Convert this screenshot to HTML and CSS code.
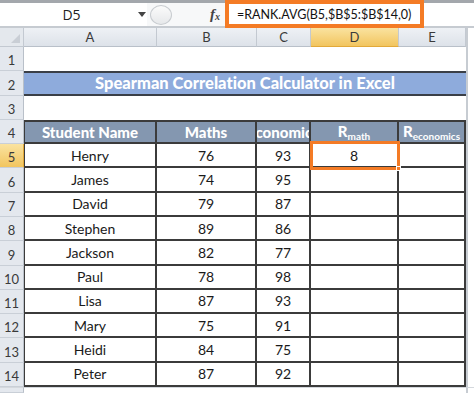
FILE: index.html
```html
<!DOCTYPE html>
<html lang="en">
<head>
  <meta charset="UTF-8">
  <title>Spearman Correlation Calculator</title>
  <link rel="stylesheet" href="styles.css">
</head>
<body>
  <div class="formula-bar">
    <div class="name-box">D5</div>
    <div class="name-arrow">
      <svg width="8" height="5" viewBox="0 0 8 5"><path d="M0 0h8L4 5z" fill="#444"/></svg>
    </div>
    <div class="fx-area">
      <div class="round-btn"></div>
      <span class="fx">f<sub>x</sub></span>
    </div>
    <div class="formula">=RANK.AVG(B5,$B$5:$B$14,0)</div>
    <div class="formula-rest"></div>
  </div>

  <div class="sheet">
    <!-- column headers -->
    <div class="corner"><span class="corner-tri"></span></div>
    <div class="col-head">A</div>
    <div class="col-head">B</div>
    <div class="col-head">C</div>
    <div class="col-head active">D</div>
    <div class="col-head">E</div>
    <div class="edge"></div>

    <!-- row 1 -->
    <div class="row-head">1</div>
    <div class="blank span5"></div>
    <div class="edge"></div>

    <!-- row 2 -->
    <div class="row-head">2</div>
    <div class="title span5">Spearman Correlation Calculator in Excel</div>
    <div class="edge"></div>

    <!-- row 3 -->
    <div class="row-head">3</div>
    <div class="blank span5"></div>
    <div class="edge"></div>

    <!-- row 4 -->
    <div class="row-head">4</div>
    <div class="cell th first">Student Name</div>
    <div class="cell th">Maths</div>
    <div class="cell th clip"><span>Economics</span></div>
    <div class="cell th"><span>R<sub>math</sub></span></div>
    <div class="cell th last"><span>R<sub>economics</sub></span></div>
    <div class="edge"></div>

    <div class="row-head active">5</div>
    <div class="cell first">Henry</div>
    <div class="cell">76</div>
    <div class="cell">93</div>
    <div class="cell selected">8<span class="sel-box"><span class="handle"></span></span></div>
    <div class="cell last"></div>
    <div class="edge"></div>

    <div class="row-head">6</div>
    <div class="cell first">James</div><div class="cell">74</div><div class="cell">95</div><div class="cell"></div><div class="cell last"></div>
    <div class="edge"></div>

    <div class="row-head">7</div>
    <div class="cell first">David</div><div class="cell">79</div><div class="cell">87</div><div class="cell"></div><div class="cell last"></div>
    <div class="edge"></div>

    <div class="row-head">8</div>
    <div class="cell first">Stephen</div><div class="cell">89</div><div class="cell">86</div><div class="cell"></div><div class="cell last"></div>
    <div class="edge"></div>

    <div class="row-head">9</div>
    <div class="cell first">Jackson</div><div class="cell">82</div><div class="cell">77</div><div class="cell"></div><div class="cell last"></div>
    <div class="edge"></div>

    <div class="row-head">10</div>
    <div class="cell first">Paul</div><div class="cell">78</div><div class="cell">98</div><div class="cell"></div><div class="cell last"></div>
    <div class="edge"></div>

    <div class="row-head">11</div>
    <div class="cell first">Lisa</div><div class="cell">87</div><div class="cell">93</div><div class="cell"></div><div class="cell last"></div>
    <div class="edge"></div>

    <div class="row-head">12</div>
    <div class="cell first">Mary</div><div class="cell">75</div><div class="cell">91</div><div class="cell"></div><div class="cell last"></div>
    <div class="edge"></div>

    <div class="row-head">13</div>
    <div class="cell first">Heidi</div><div class="cell">84</div><div class="cell">75</div><div class="cell"></div><div class="cell last"></div>
    <div class="edge"></div>

    <div class="row-head">14</div>
    <div class="cell first">Peter</div><div class="cell">87</div><div class="cell">92</div><div class="cell"></div><div class="cell last"></div>
    <div class="edge"></div>

    <!-- bottom strip -->
    <div class="row-head foot"></div>
    <div class="foot span5"></div>
    <div class="edge foot"></div>
  </div>
</body>
</html>
```

FILE: styles.css
```css
* {
  box-sizing: border-box;
}

body {
  margin: 0;
  width: 474px;
  height: 393px;
  overflow: hidden;
  background: #fff;
  font-family: Lato, 'Liberation Sans', sans-serif;
  font-variant-ligatures: none;
  color: #1a1a1a;
}

/* formula bar */

.formula-bar {
  display: flex;
  height: 28px;
  border-top: 3px solid #a3a7ac;
  border-bottom: 2px solid #c6cbd1;
  background: #fff;
}

.name-box {
  width: 137px;
  display: flex;
  align-items: center;
  justify-content: center;
  font-family: 'Open Sans', sans-serif;
  font-size: 14px;
  color: #222;
  padding-left: 6px;
}

.name-arrow {
  width: 10px;
  display: flex;
  align-items: center;
  justify-content: center;
}

.fx-area {
  width: 78px;
  display: flex;
  align-items: center;
  background: #f7f8f9;
}

.round-btn {
  width: 22px;
  height: 20px;
  margin-left: 3px;
  border-radius: 50%;
  border: 1px solid #c8ccd0;
  background: linear-gradient(#fbfbfb, #e6e8ea);
}

.fx {
  margin-left: auto;
  margin-right: 5px;
  font-family: 'Liberation Serif', serif;
  font-style: italic;
  font-weight: bold;
  font-size: 15px;
  color: #444;
}

.fx sub {
  font-size: 10px;
  vertical-align: -1px;
}

.formula {
  width: 199px;
  margin-top: -3px;
  height: 28px;
  border: 4px solid #f47b25;
  display: flex;
  align-items: center;
  padding-left: 8px;
  font-family: Lato, sans-serif;
  font-size: 12.5px;
  color: #111;
  white-space: nowrap;
  background: #fff;
}

.formula-rest {
  flex: 1;
}

/* grid */

.sheet {
  display: grid;
  grid-template-columns: 24px 133px 100px 54px 88px 67px 8px;
  grid-template-rows: 19px repeat(14, 24.29px) 6px;
}

.span5 {
  grid-column: span 5;
}

.corner {
  background: #e4e8ed;
  border-right: 1px solid #c3c9d1;
  border-bottom: 1px solid #c3c9d1;
  position: relative;
}

.corner-tri {
  position: absolute;
  right: 3px;
  bottom: 3px;
  width: 0;
  height: 0;
  border-left: 9px solid transparent;
  border-bottom: 9px solid #c9ced5;
}

.col-head {
  background: linear-gradient(#eef1f5, #dde2e9);
  border-right: 1px solid #c3c9d1;
  border-bottom: 1px solid #b9c0c9;
  display: flex;
  align-items: center;
  justify-content: center;
  font-size: 13px;
  color: #3a3a3a;
}

.col-head.active {
  background: linear-gradient(#fae3a0, #f2c55f);
  border-bottom-color: #e2a93a;
}

.row-head {
  background: #e4e8ee;
  border-right: 1px solid #b9c0c9;
  border-bottom: 1px solid #c9cfd7;
  display: flex;
  align-items: flex-end;
  justify-content: center;
  padding-bottom: 2px;
  font-size: 13px;
  color: #3a3a3a;
}

.row-head.active {
  background: linear-gradient(#fae3a0, #f2c55f);
  border-right-color: #e2a93a;
}

.edge {
  border-left: 2px solid #c7ccd2;
  background: #fff;
}

.blank {
  background: #fff;
}

.title {
  background: #8eabdc;
  border-top: 2px solid #3a3f47;
  border-bottom: 2px solid #3a3f47;
  color: #fff;
  font-weight: 900;
  font-size: 16.5px;
  display: flex;
  align-items: center;
  justify-content: center;
}

.cell {
  border-right: 2px solid #3b3b3b;
  border-bottom: 2px solid #3b3b3b;
  display: flex;
  align-items: center;
  justify-content: center;
  font-size: 14px;
  color: #1a1a1a;
  white-space: nowrap;
  background: #fff;
}

.cell.first {
  border-left: 1px solid #3b3b3b;
}

.th {
  background: #8497b0;
  border-top: 2px solid #3b3b3b;
  color: #fff;
  font-weight: 900;
  font-size: 15px;
}

.th sub {
  font-size: 10px;
  font-weight: 700;
  vertical-align: -3px;
  line-height: 1;
}

.clip {
  overflow: hidden;
}

.clip span {
  flex-shrink: 0;
}

.selected {
  position: relative;
}

.sel-box {
  position: absolute;
  left: -1px;
  top: -3px;
  right: -3px;
  bottom: -4px;
  border: 3px solid #f47b25;
}

.handle {
  position: absolute;
  right: -4px;
  bottom: -4px;
  width: 5px;
  height: 5px;
  background: #f47b25;
  border: 1px solid #fff;
}

.foot {
  background: #fff;
  border-top: 1px solid #d4d8dd;
}

.row-head.foot {
  background: #e4e8ee;
}
```
